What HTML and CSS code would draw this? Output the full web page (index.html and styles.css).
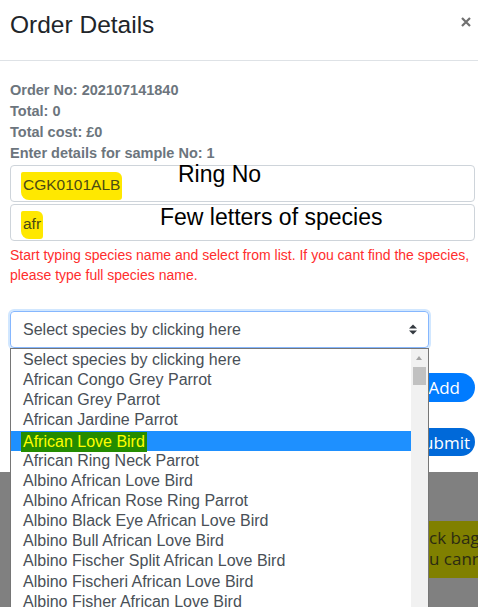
FILE: index.html
```html
<!DOCTYPE html>
<html lang="en">
<head>
<meta charset="utf-8">
<title>Order Details</title>
<link rel="stylesheet" href="styles.css">
</head>
<body>
<div class="modal">
  <div class="modal-header">
    <h4 class="modal-title">Order Details</h4>
    <span class="close"><svg width="10" height="10" viewBox="0 0 10 10"><path d="M1 1L9 9M9 1L1 9" stroke="#707070" stroke-width="2.2" stroke-linecap="butt"/></svg></span>
  </div>
  <div class="modal-body">
    <div class="info">
      <div>Order No: 202107141840</div>
      <div>Total: 0</div>
      <div>Total cost: £0</div>
      <div>Enter details for sample No: 1</div>
    </div>
    <div class="field field-ring">
      <div class="input"><span class="mark">CGK0101ALB</span></div>
      <span class="note note-ring">Ring No</span>
    </div>
    <div class="field field-species">
      <div class="input"><span class="mark">afr</span></div>
      <span class="note note-species">Few letters of species</span>
    </div>
    <p class="hint">Start typing species name and select from list. If you cant find the species, please type full species name.</p>
    <div class="select-wrap">
      <div class="select">
        <span>Select species by clicking here</span>
        <svg class="select-arrow" width="8" height="11" viewBox="0 0 8 11"><path d="M0 4.5L4 0.5L8 4.5Z M0 6.5L4 10.5L8 6.5Z" fill="#343a40"/></svg>
      </div>
      <div class="listbox">
        <div class="options">
          <div class="opt">Select species by clicking here</div>
          <div class="opt">African Congo Grey Parrot</div>
          <div class="opt">African Grey Parrot</div>
          <div class="opt">African Jardine Parrot</div>
          <div class="opt sel"><span class="hl">African Love Bird</span></div>
          <div class="opt">African Ring Neck Parrot</div>
          <div class="opt">Albino African Love Bird</div>
          <div class="opt">Albino African Rose Ring Parrot</div>
          <div class="opt">Albino Black Eye African Love Bird</div>
          <div class="opt">Albino Bull African Love Bird</div>
          <div class="opt">Albino Fischer Split African Love Bird</div>
          <div class="opt">Albino Fischeri African Love Bird</div>
          <div class="opt">Albino Fisher African Love Bird</div>
        </div>
        <div class="scrollbar">
          <span class="sb-up"></span>
          <span class="sb-thumb"></span>
        </div>
      </div>
    </div>
    <div class="actions">
      <button class="btn btn-add">Add</button>
      <button class="btn btn-submit">Submit</button>
    </div>
  </div>
</div>
<div class="backdrop">
  <div class="peek">ck bag<br>u cann</div>
</div>
</body>
</html>
```
FILE: styles.css
```css
* { box-sizing: border-box; }

html, body {
  margin: 0;
  height: 100%;
}

body {
  background: #808080;
  font-family: "Liberation Sans", Arial, sans-serif;
  overflow: hidden;
}

.modal {
  background: #fff;
  height: 472px;
  position: relative;
}

.modal-header {
  height: 61px;
  border-bottom: 1px solid #dee2e6;
  display: flex;
  justify-content: space-between;
  align-items: flex-start;
  padding: 0 7px 0 10px;
}

.modal-title {
  margin: 0;
  padding-top: 10px;
  font-size: 24.5px;
  font-weight: 400;
  line-height: 29px;
  color: #212529;
}

.close {
  margin-top: 17px;
  display: flex;
}

.modal-body {
  padding: 19px 3px 0 10px;
}

.info {
  font-size: 14.5px;
  font-weight: 700;
  line-height: 21px;
  color: #6c757d;
}

.field {
  position: relative;
}

.field-ring { margin-top: 1px; }
.field-species { margin-top: 2px; }

.input {
  height: 37px;
  border: 1px solid #ced4da;
  border-radius: 4px;
  padding: 0 12px;
  display: flex;
  align-items: center;
  font-size: 15.5px;
  color: #4b4b14;
}

.mark {
  background: #ffe800;
  padding: 4px 2px 6px;
  margin-left: -2px;
  margin-top: 4px;
  border-radius: 2px 6px 3px 8px;
}

.note {
  position: absolute;
  font-size: 23px;
  line-height: 26px;
  color: #000;
}

.note-ring { top: -4px; left: 168px; }
.note-species { top: 0; left: 150px; }

.hint {
  margin: 4px 0 0;
  color: #ff2d2d;
  font-size: 14px;
  line-height: 20px;
}

.select-wrap {
  position: relative;
  width: 419px;
  margin-top: 26px;
}

.select {
  height: 37px;
  border: 1px solid #86b7fe;
  border-radius: 4px;
  box-shadow: 0 0 0 2px rgba(0, 123, 255, 0.18);
  display: flex;
  align-items: center;
  justify-content: space-between;
  padding: 0 11px 0 12px;
  font-size: 16px;
  color: #495057;
}

.listbox {
  position: absolute;
  top: 37px;
  left: 0;
  width: 419px;
  height: 275px;
  border: 1px solid #767676;
  background: #fff;
  display: flex;
  z-index: 5;
}

.options {
  flex: 1;
  padding-top: 1px;
  overflow: hidden;
}

.opt {
  height: 20.15px;
  line-height: 20px;
  padding-left: 12px;
  font-size: 16px;
  color: #495057;
  white-space: nowrap;
}

.opt.sel {
  background: #1e90ff;
}

.hl {
  display: inline-block;
  background: #248c00;
  color: #ffff00;
  padding: 0 2px 0 2px;
  margin-left: -2px;
  line-height: 20px;
  margin-top: 1px;
}

.scrollbar {
  width: 17px;
  background: #f1f1f1;
  position: relative;
}

.sb-up {
  position: absolute;
  top: 7px;
  left: 5px;
  width: 0;
  height: 0;
  border-left: 3.5px solid transparent;
  border-right: 3.5px solid transparent;
  border-bottom: 4px solid #a3a3a3;
}

.sb-thumb {
  position: absolute;
  top: 18px;
  left: 2px;
  width: 13px;
  height: 18px;
  background: #c1c1c1;
}

.actions {
  display: flex;
  flex-direction: column;
  align-items: flex-end;
  gap: 26px;
  margin-top: 25px;
}

.btn {
  border: none;
  border-radius: 15px;
  color: #fff;
  font-family: "Open Sans", "Liberation Sans", sans-serif;
  font-size: 17px;
  height: 29px;
  line-height: 29px;
}

.btn-add {
  background: #007bff;
  padding: 0 15px 0 14px;
}

.btn-submit {
  background: #0069d9;
  height: 28px;
  padding: 0 5px 0 14px;
}

.backdrop {
  height: 135px;
  display: flex;
  justify-content: flex-end;
  padding-top: 49px;
}

.peek {
  width: 50px;
  height: 57px;
  background: #808000;
  overflow: hidden;
  white-space: nowrap;
  font-family: "Open Sans", "Liberation Sans", sans-serif;
  font-size: 17px;
  line-height: 21px;
  color: #2b2b12;
  padding: 6px 0 0 1px;
}
```
